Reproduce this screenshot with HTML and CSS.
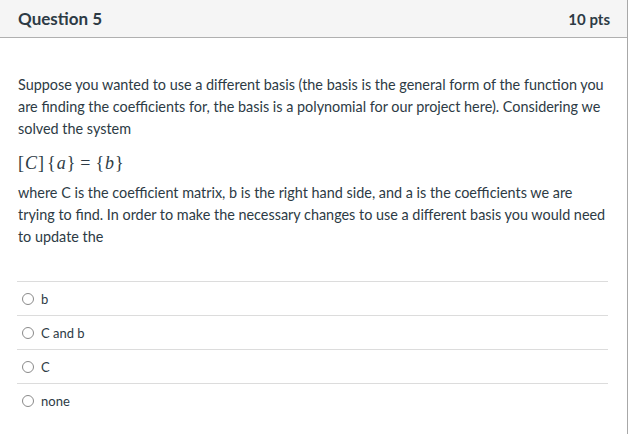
FILE: index.html
```html
<!DOCTYPE html>
<html>
<head>
<meta charset="utf-8">
<link rel="stylesheet" href="styles.css">
</head>
<body>
<div class="question">
  <div class="header">
    <span class="title">Question 5</span>
    <span class="pts">10 pts</span>
  </div>
  <div class="content">
    <p class="para">Suppose you wanted to use a different basis (the basis is the general form of the function you are finding the coefficients for, the basis is a polynomial for our project here). Considering we solved the system</p>
    <p class="math"><span class="grp">[<i>C</i>]</span><span class="grp sp">{<i>a</i>}</span><span class="eq">=</span><span class="grp">{<i>b</i>}</span></p>
    <p class="para">where C is the coefficient matrix, b is the right hand side, and a is the coefficients we are trying to find. In order to make the necessary changes to use a different basis you would need to update the</p>
  </div>
  <div class="answers">
    <div class="answer"><span class="radio"></span><span class="label">b</span></div>
    <div class="answer"><span class="radio"></span><span class="label">C and b</span></div>
    <div class="answer"><span class="radio"></span><span class="label">C</span></div>
    <div class="answer"><span class="radio"></span><span class="label">none</span></div>
  </div>
</div>
</body>
</html>
```
FILE: styles.css
```css
html, body {
  margin: 0;
  padding: 0;
  background: #fff;
}
.question {
  width: 627px;
  height: 434px;
  border-right: 1px solid #a8a8a8;
  font-family: Lato, "Open Sans", sans-serif;
  color: #2d3b45;
}
.header {
  height: 38px;
  background: #f5f5f5;
  border-bottom: 1px solid #b0b0b0;
  display: flex;
  justify-content: space-between;
  align-items: center;
  padding: 0 17px 0 18px;
  box-sizing: border-box;
}
.title {
  font-weight: 700;
  font-size: 17px;
}
.pts {
  font-weight: 700;
  font-size: 15px;
}
.content {
  padding: 36px 20px 0 18px;
}
.para {
  margin: 0;
  font-size: 14.4px;
  line-height: 22px;
}
.math {
  margin: 12px 0 8px 0;
  font-family: "Liberation Serif", serif;
  font-size: 18px;
  line-height: 22px;
  display: flex;
  align-items: baseline;
}
.math i {
  font-family: "Liberation Serif", serif;
  font-style: italic;
  padding: 0 1px;
}
.grp {
  white-space: nowrap;
}
.sp {
  margin-left: 3px;
}
.eq {
  margin: 0 5px;
}
.answers {
  margin: 33px 19px 0 17px;
}
.answer {
  height: 34px;
  border-top: 1px solid #dcdcdc;
  display: flex;
  align-items: center;
  padding-left: 5px;
  box-sizing: border-box;
}
.radio {
  width: 10px;
  height: 10px;
  border: 1px solid #8a8a8a;
  border-radius: 50%;
  margin-right: 7px;
}
.label {
  font-family: Lato, "Open Sans", sans-serif;
  font-size: 13px;
  color: #2d3b45;
}
```
